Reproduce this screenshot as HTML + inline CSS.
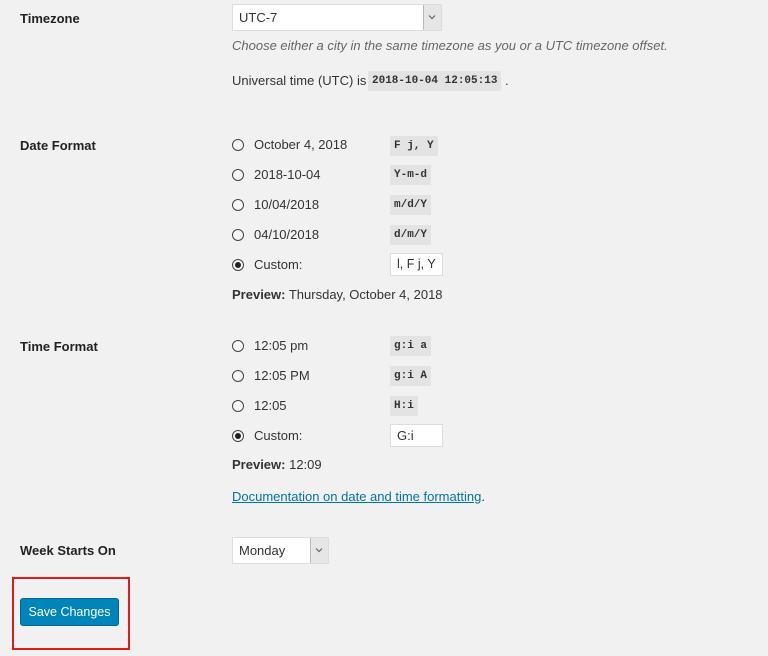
<!DOCTYPE html>
<html><head><meta charset="utf-8"><style>
body{margin:0;width:768px;height:656px;background:#f1f1f1;font-family:"Liberation Sans",sans-serif;font-size:13px;color:#333;position:relative;overflow:hidden}
.a{position:absolute;white-space:nowrap;line-height:18px}
.lab{font-weight:bold;color:#222;font-size:13px}
.code{position:absolute;background:#e3e3e3;font-family:"Liberation Mono",monospace;font-size:11px;line-height:20px;padding:0 4px;color:#333;font-weight:bold}
.sel{position:absolute;background:#fff;border:1px solid #ddd;box-sizing:border-box}
.sel .arr{position:absolute;right:0;top:0;bottom:0;width:17px;background:#e6e6e6;border-left:1px solid #bbb}
.sel .arr svg{position:absolute;left:4px;top:9px}
.inp{position:absolute;background:#fff;border:1px solid #ddd;box-sizing:border-box;font-size:13px;padding-left:6px}
.r{position:absolute;width:12px;height:12px;border:1px solid #444;border-radius:50%;box-sizing:border-box;background:#f7f7f7}
.r.on::after{content:"";position:absolute;left:2px;top:2px;width:6px;height:6px;border-radius:50%;background:#222}
</style></head><body>
<div class="a lab" style="left:20px;top:10px">Timezone</div>
<div class="sel" style="left:232px;top:4px;width:210px;height:27px"><span class="a" style="left:6px;top:4px;color:#333">UTC-7</span><div class="arr"><svg width="8" height="6"><path d="M1 1.5L4 4.5L7 1.5" stroke="#666" fill="none" stroke-width="1.2"/></svg></div></div>
<div class="a" style="left:232px;top:37px;font-style:italic;color:#666">Choose either a city in the same timezone as you or a UTC timezone offset.</div>
<div class="a" style="left:232px;top:72px">Universal time (UTC) is</div>
<div class="code" style="left:368px;top:71px">2018-10-04 12:05:13</div>
<div class="a" style="left:505px;top:72px">.</div>

<div class="a lab" style="left:20px;top:137px">Date Format</div>
<div class="r" style="left:232px;top:139px"></div><div class="a" style="left:254px;top:136px">October 4, 2018</div><div class="code" style="left:390px;top:136px">F j, Y</div>
<div class="r" style="left:232px;top:169px"></div><div class="a" style="left:254px;top:166px">2018-10-04</div><div class="code" style="left:390px;top:165px">Y-m-d</div>
<div class="r" style="left:232px;top:199px"></div><div class="a" style="left:254px;top:196px">10/04/2018</div><div class="code" style="left:390px;top:195px">m/d/Y</div>
<div class="r" style="left:232px;top:229px"></div><div class="a" style="left:254px;top:226px">04/10/2018</div><div class="code" style="left:390px;top:225px">d/m/Y</div>
<div class="r on" style="left:232px;top:259px"></div><div class="a" style="left:254px;top:256px">Custom:</div><div class="inp" style="left:390px;top:253px;width:53px;height:23px;line-height:21px;font-size:12.5px">l, F j, Y</div>
<div class="a" style="left:232px;top:286px"><b>Preview:</b> Thursday, October 4, 2018</div>

<div class="a lab" style="left:20px;top:338px">Time Format</div>
<div class="r" style="left:232px;top:340px"></div><div class="a" style="left:254px;top:337px">12:05 pm</div><div class="code" style="left:390px;top:336px">g:i a</div>
<div class="r" style="left:232px;top:370px"></div><div class="a" style="left:254px;top:367px">12:05 PM</div><div class="code" style="left:390px;top:366px">g:i A</div>
<div class="r" style="left:232px;top:400px"></div><div class="a" style="left:254px;top:397px">12:05</div><div class="code" style="left:390px;top:396px">H:i</div>
<div class="r on" style="left:232px;top:430px"></div><div class="a" style="left:254px;top:427px">Custom:</div><div class="inp" style="left:390px;top:424px;width:53px;height:23px;line-height:21px">G:i</div>
<div class="a" style="left:232px;top:456px"><b>Preview:</b> 12:09</div>
<div class="a" style="left:232px;top:488px"><span style="color:#0073aa;text-decoration:underline">Documentation on date and time formatting</span>.</div>

<div class="a lab" style="left:20px;top:542px">Week Starts On</div>
<div class="sel" style="left:232px;top:537px;width:97px;height:27px"><span class="a" style="left:6px;top:4px">Monday</span><div class="arr"><svg width="8" height="6"><path d="M1 1.5L4 4.5L7 1.5" stroke="#666" fill="none" stroke-width="1.2"/></svg></div></div>

<div style="position:absolute;left:12px;top:577px;width:118px;height:73px;border:2px solid #e01b1b;box-sizing:border-box"></div>
<div style="position:absolute;left:20px;top:598px;width:99px;height:28px;background:#0085ba;border:1px solid #006799;box-sizing:border-box;border-radius:3px;color:#fff;font-size:12.5px;text-align:center;line-height:26px">Save Changes</div>
</body></html>
